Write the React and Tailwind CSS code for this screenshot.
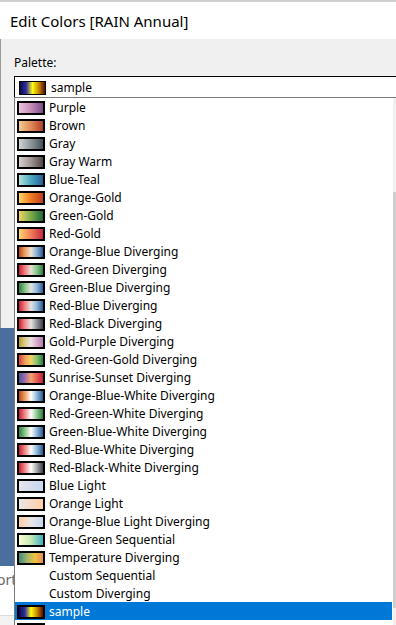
import React from "react"

const palettes = [
  { name: "Purple", g: "linear-gradient(to right, #ecc4e0, #c48cb8, #7a4c86)" },
  { name: "Brown", g: "linear-gradient(to right, #f2cc90, #de8a58, #b03e2a)" },
  { name: "Gray", g: "linear-gradient(to right, #d0d4d4, #8c969a, #46525c)" },
  { name: "Gray Warm", g: "linear-gradient(to right, #d8d0cc, #a09490, #524846)" },
  { name: "Blue-Teal", g: "linear-gradient(to right, #b0e4dc, #4aa8c0, #2a5e98)" },
  { name: "Orange-Gold", g: "linear-gradient(to right, #ffd466, #f07a22, #bc3c22)" },
  { name: "Green-Gold", g: "linear-gradient(to right, #f0d464, #7aac50, #1c6a3a)" },
  { name: "Red-Gold", g: "linear-gradient(to right, #ffd472, #f27a58, #c42a40)" },
  { name: "Orange-Blue Diverging", g: "linear-gradient(to right, #b8461a, #f0a060, #ece4d8, #84acd4, #2a5c92)" },
  { name: "Red-Green Diverging", g: "linear-gradient(to right, #cc1e32, #f08282, #e4e2d4, #84c484, #2a7e40)" },
  { name: "Green-Blue Diverging", g: "linear-gradient(to right, #2a7e40, #8cc48c, #e2e2e2, #8cb6da, #2a5c92)" },
  { name: "Red-Blue Diverging", g: "linear-gradient(to right, #cc1e32, #f08484, #e4e2e2, #8cb6da, #2a5c92)" },
  { name: "Red-Black Diverging", g: "linear-gradient(to right, #cc1e32, #f08c8c, #e4e2e2, #8e9096, #3c4044)" },
  { name: "Gold-Purple Diverging", g: "linear-gradient(to right, #bc9a2a, #dccc8c, #ebe4e4, #dca8cc, #b47eb0)" },
  { name: "Red-Green-Gold Diverging", g: "linear-gradient(to right, #e03c40, #f0a060, #f2d462, #84c070, #2a7e40)" },
  { name: "Sunrise-Sunset Diverging", g: "linear-gradient(to right, #3c5aa4, #a66ca4, #f2a470, #e65a50, #c22040)" },
  { name: "Orange-Blue-White Diverging", g: "linear-gradient(to right, #b8461a, #f0a060, #ffffff, #8cb6da, #2a5c92)" },
  { name: "Red-Green-White Diverging", g: "linear-gradient(to right, #cc1e32, #f08c8c, #ffffff, #8cc88c, #2a7e40)" },
  { name: "Green-Blue-White Diverging", g: "linear-gradient(to right, #2a7e40, #8cc88c, #ffffff, #8cb6da, #2a5c92)" },
  { name: "Red-Blue-White Diverging", g: "linear-gradient(to right, #cc1e32, #f08c8c, #ffffff, #8cb6da, #2a5c92)" },
  { name: "Red-Black-White Diverging", g: "linear-gradient(to right, #cc1e32, #f08c8c, #ffffff, #a0a2a6, #3c4044)" },
  { name: "Blue Light", g: "linear-gradient(to right, #e4e6ea, #c6d6f0)" },
  { name: "Orange Light", g: "linear-gradient(to right, #e8e6e6, #ffcea6)" },
  { name: "Orange-Blue Light Diverging", g: "linear-gradient(to right, #ffcea6, #e8e8e8, #c6d6f0)" },
  { name: "Blue-Green Sequential", g: "linear-gradient(to right, #fcfed2, #c4e8b4, #3cb0c0)" },
  { name: "Temperature Diverging", g: "linear-gradient(to right, #3a8a7e, #a4b46c, #f0c440, #e88c54)" },
  { name: "Custom Sequential", g: null },
  { name: "Custom Diverging", g: null },
  { name: "sample", g: "linear-gradient(to right, #0a0a50, #3030a0, #ffff10, #c88a00, #5a0800)", selected: true },
  { name: "", g: "linear-gradient(to right, #1010d0, #20e0ff, #ffff20, #ff8000, #e01010)" },
]

const sampleGradient = "linear-gradient(to right, #0a0a50, #3030a0, #ffff10, #c88a00, #5a0800)"

export default function App() {
  return (
    <div className="relative w-[396px] h-[625px] overflow-hidden bg-[#f0f0f0] text-black" style={{ fontFamily: '"Noto Sans", "Open Sans", sans-serif' }}>
      {/* Background: dialog + desktop + window behind */}
      <div className="flex flex-col h-full">
        <div className="h-[2px] bg-[#cfcfcf]" />
        <div className="h-[37px] bg-white flex items-center pl-[10px] pt-[1px] text-[15px]">Edit Colors [RAIN Annual]</div>
        <div className="h-[289px] bg-[#f0f0f0] border-l border-[#9a9a9a] pl-[13px] pt-[16px]">
          <div className="text-[12px] leading-[16px]">Palette:</div>
        </div>
        <div className="h-[238px] bg-[#4a6f9e]" />
        <div className="h-[49px] bg-white pt-[3px] text-[14px] text-[#6a6a6a] overflow-hidden">
          <span className="block whitespace-nowrap ml-[-3px]">ort</span>
        </div>
        <div className="flex-1 border-t border-[#dcdcdc] bg-[#f3f3f3]" />
      </div>

      {/* Combobox */}
      <div className="absolute left-[14px] top-[76px] right-[-10px] h-[21px] bg-white border border-b-0 border-black flex items-center pl-[4px] pt-[1px]">
        <div className="w-[27px] h-[14px] border border-black" style={{ background: sampleGradient }} />
        <span className="ml-[5px] text-[12px]">sample</span>
      </div>

      {/* Dropdown list */}
      <div className="absolute left-[14px] top-[97px] right-0 bottom-[-40px] bg-white border-t border-l border-[#7a7a7a] flex">
        <div className="flex-1 flex flex-col">
          {palettes.map((p, i) => (
            <div
              key={i}
              className={`h-[18px] shrink-0 flex items-center pl-[2px] pt-[1px] mr-[1px] text-[12px] whitespace-nowrap ${p.selected ? "bg-[#0078d7] text-white" : ""}`}
            >
              {p.g ? (
                <div className="w-[28px] h-[14px] border-2 border-black shrink-0" style={{ background: p.g }} />
              ) : (
                <div className="w-[28px] h-[14px] shrink-0" />
              )}
              <span className="ml-[4px]">{p.name}</span>
            </div>
          ))}
        </div>
        <div className="w-[3px] flex flex-col bg-[#f0f0f0]">
          <div className="h-[94px]" />
          <div className="h-[416px] bg-[#cdcdcd]" />
        </div>
      </div>
    </div>
  )
}
